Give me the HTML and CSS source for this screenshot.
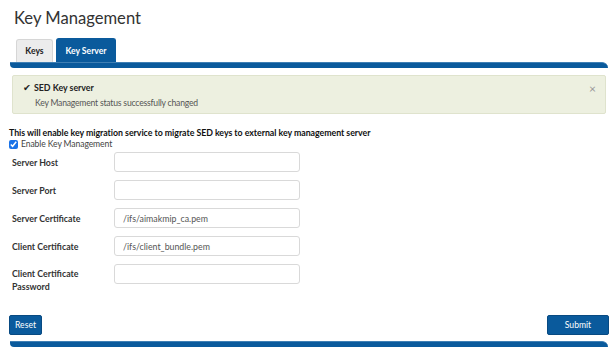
FILE: index.html
```html
<!DOCTYPE html>
<html>
<head>
<meta charset="utf-8">
<link rel="stylesheet" href="styles.css">
</head>
<body>
<div class="page">
  <h1 class="title">Key Management</h1>
  <div class="tabs">
    <div class="tab">Keys</div>
    <div class="tab active">Key Server</div>
  </div>
  <div class="tabbar"></div>
  <div class="alert">
    <div class="alert-head"><span class="check">&#10004;</span>SED Key server</div>
    <div class="alert-msg">Key Management status successfully changed</div>
    <span class="close">&#215;</span>
  </div>
  <div class="intro">This will enable key migration service to migrate SED keys to external key management server</div>
  <label class="enable"><input type="checkbox" checked class="cb">Enable Key Management</label>
  <div class="form">
    <div class="row"><div class="label">Server Host</div><input class="field" type="text"></div>
    <div class="row"><div class="label">Server Port</div><input class="field" type="text"></div>
    <div class="row"><div class="label">Server Certificate</div><input class="field" type="text" value="/ifs/aimakmip_ca.pem"></div>
    <div class="row"><div class="label">Client Certificate</div><input class="field" type="text" value="/ifs/client_bundle.pem"></div>
    <div class="row tall"><div class="label">Client Certificate<br>Password</div><input class="field" type="password"></div>
  </div>
  <div class="actions">
    <button class="btn reset">Reset</button>
    <button class="btn submit">Submit</button>
  </div>
  <div class="bottombar"></div>
</div>
</body>
</html>
```
FILE: styles.css
```css
* { box-sizing: border-box; }
body {
  margin: 0;
  background: #fff;
  font-family: Lato, "Open Sans", "Liberation Sans", sans-serif;
  color: #222;
}
.page {
  width: 612px;
  height: 349px;
  padding: 0 3px 0 9px;
  display: flex;
  flex-direction: column;
}
.title {
  margin: 6px 0 0 5px;
  font-size: 16.6px;
  font-weight: 400;
  line-height: 24px;
  color: #333;
}
.tabs {
  display: flex;
  gap: 3px;
  margin: 8px 0 0 7px;
  align-items: flex-end;
}
.tab {
  width: 37px;
  height: 23px;
  background: #ececec;
  border: 1px solid #d6d6d6;
  border-bottom: none;
  border-radius: 3px 3px 0 0;
  font-size: 8.6px;
  font-weight: 700;
  color: #222;
  display: flex;
  align-items: center;
  justify-content: center;
}
.tab.active {
  width: 60px;
  height: 24px;
  background: #0a5a9c;
  border-color: #0a5a9c;
  color: #fff;
}
.tabbar {
  height: 6px;
  background: #0a5a9c;
  margin-left: 1px;
  margin-right: 1px;
  border-radius: 0 6px 0 4px;
  border-top: 1px solid #3f7fb4;
}
.alert {
  position: relative;
  margin: 7px 3px 0 3px;
  height: 39px;
  background: #edf0e0;
  border: 1px solid #dfe3cd;
  border-radius: 2px;
  padding: 6px 0 0 10px;
}
.alert-head {
  font-size: 8.8px;
  font-weight: 700;
  color: #222;
  line-height: 12px;
}
.check { font-size: 9.5px; margin-right: 3px; font-family: "DejaVu Sans", sans-serif; }
.alert-msg {
  font-size: 8.6px;
  letter-spacing: -0.2px;
  color: #555;
  line-height: 12px;
  margin-top: 3px;
  padding-left: 12px;
}
.close {
  position: absolute;
  right: 9px;
  top: 5px;
  font-size: 12px;
  color: #999;
}
.intro {
  margin-top: 13px;
  font-size: 8.8px;
  letter-spacing: -0.04px;
  font-weight: 700;
  line-height: 11px;
  color: #111;
}
.enable {
  display: flex;
  align-items: center;
  font-size: 8.6px;
  letter-spacing: -0.1px;
  color: #444;
  line-height: 11px;
  margin-top: 1px;
}
.cb {
  width: 9px;
  height: 9px;
  margin: 0 3px 0 0;
  accent-color: #1a73e8;
}
.form {
  display: flex;
  flex-direction: column;
  gap: 8px;
  margin-top: 2px;
}
.row {
  display: flex;
  align-items: center;
}
.label {
  width: 105px;
  padding-left: 3px;
  font-size: 8.8px;
  font-weight: 700;
  color: #333;
  line-height: 13px;
}
.field {
  width: 186px;
  height: 20px;
  border: 1px solid #d9d9d9;
  border-radius: 3px;
  padding: 0 8px;
  font-family: Lato, "Open Sans", "Liberation Sans", sans-serif;
  font-size: 8.8px;
  color: #555;
  background: #fff;
}
.row.tall { align-items: flex-start; }
.row.tall .label { padding-top: 3px; }
.actions {
  display: flex;
  justify-content: space-between;
  margin-top: auto;
  padding-right: 0;
}
.btn {
  height: 20px;
  padding: 0;
  background: #0a5a9c;
  border: 1px solid #084a82;
  border-radius: 2px;
  color: #fff;
  font-family: Lato, "Open Sans", "Liberation Sans", sans-serif;
  font-size: 8.6px;
}
.btn.reset { width: 33px; }
.btn.submit { width: 62px; }
.bottombar {
  height: 6px;
  margin: 6px 1px 2px 1px;
  background: #0a5a9c;
  border-top: 1px solid #3f7fb4;
  border-radius: 0 6px 0 4px;
}
```
